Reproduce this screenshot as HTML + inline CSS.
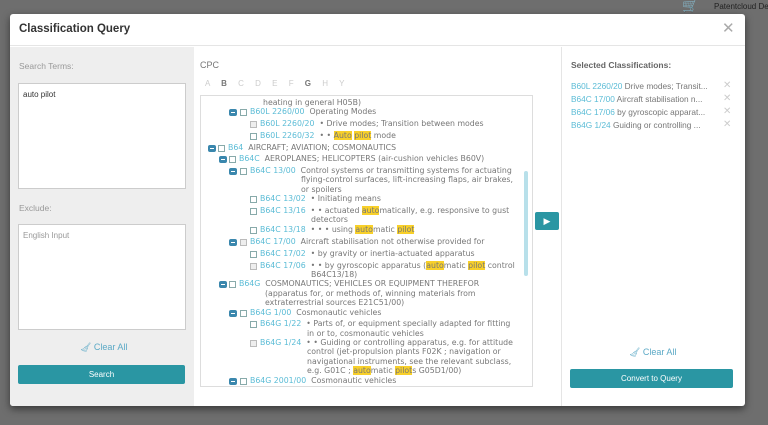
<!DOCTYPE html>
<html><head><style>
*{margin:0;padding:0;box-sizing:border-box}
body{width:768px;height:425px;position:relative;overflow:hidden;font-family:"Liberation Sans",sans-serif}
.a{position:absolute}
.modal{left:10px;top:14px;width:735px;height:392px;background:#fff;border-radius:3px;box-shadow:0 3px 8px rgba(0,0,0,.5);overflow:hidden}
.t{font-family:"DejaVu Sans",sans-serif;font-size:7.8px;color:#777;white-space:nowrap;line-height:10px}
.c{color:#5bbcd6}
.hl{background:#f8d02a;color:#777}
.m{width:8px;height:7px;background:#3a87ad;border-radius:2px}
.m:after{content:"";position:absolute;left:2px;top:3px;width:4px;height:1px;background:#fff}
.cb{width:7px;height:7px;border:1px solid #8aa;background:#fff}
.cb.k{border-color:#bbb;background:#eee}
.btn{background:#2a96a3;color:#fff;font-size:8px;text-align:center;border-radius:2px}
.lbl{font-size:8.5px;color:#999}
.ta{background:#fff;border:1px solid #ccc;font-size:8px;color:#333;padding:6px 4px}
.sel{font-size:8.3px;color:#777;white-space:nowrap}
.x{color:#ccc;font-size:10px}
</style></head><body>
<div class="a" style="left:0;top:0;width:768px;height:425px;background:#6e6e6e"></div>
<div class="a" style="left:682px;top:0;width:12px;height:12px;font-size:13px;color:#222;line-height:12px">&#128722;</div>
<div class="a" style="left:714px;top:2px;font-size:8px;color:#222;white-space:nowrap">Patentcloud De</div>
<div class="a modal">
 <div class="a" style="left:0;top:0;width:735px;height:32px;border-bottom:1px solid #e5e5e5"></div>
 <div class="a" style="left:9px;top:9px;font-size:11.5px;font-weight:bold;color:#333">Classification Query</div>
 <div class="a" style="left:712px;top:5px;font-size:15px;color:#aaa">&#x2715;</div>
 <div class="a" style="left:0;top:33px;width:184px;height:359px;background:#eeeeee"></div>
 <div class="a" style="left:551px;top:33px;width:1px;height:359px;background:#e5e5e5"></div>
</div>
<div class="a lbl" style="left:19px;top:61px">Search Terms:</div>
<div class="a ta" style="left:18px;top:83px;width:168px;height:106px">auto pilot</div>
<div class="a lbl" style="left:19px;top:203px">Exclude:</div>
<div class="a ta" style="left:18px;top:224px;width:168px;height:106px;color:#999">English Input</div>
<div class="a" style="left:80px;top:342px;font-size:9px;color:#5ba9c6">&#x1F9F9;&#xFE0E; Clear All</div>
<div class="a btn" style="left:18px;top:365px;width:167px;height:19px;line-height:19px">Search</div>

<div class="a" style="left:200px;top:60px;font-size:9px;color:#777">CPC</div>
<div class="a" style="left:205px;top:79px;font-size:8px;color:#ccc;word-spacing:9px;white-space:nowrap">A <b style="color:#777">B</b> C D E F <b style="color:#777">G</b> H Y</div>
<div class="a" style="left:200px;top:95px;width:333px;height:292px;border:1px solid #ddd;background:#fff;overflow:hidden">
 <div class="a" style="left:323px;top:75px;width:4px;height:105px;background:#b8e0ea;border-radius:2px"></div>
</div>
<div class="a t" style="left:263px;top:98px">heating in general H05B)</div>
<div class="a m" style="left:229px;top:109px"></div><div class="a cb" style="left:240px;top:109px"></div><div class="a t" style="left:250px;top:107px"><span class="c">B60L 2260/00</span>&nbsp; Operating Modes</div>
<div class="a cb k" style="left:250px;top:121px"></div><div class="a t" style="left:260px;top:119px"><span class="c">B60L 2260/20</span>&nbsp; • Drive modes; Transition between modes</div>
<div class="a cb" style="left:250px;top:133px"></div><div class="a t" style="left:260px;top:131px"><span class="c">B60L 2260/32</span>&nbsp; • • <span class="hl">Auto</span> <span class="hl">pilot</span> mode</div>
<div class="a m" style="left:208px;top:145px"></div><div class="a cb" style="left:218px;top:145px"></div><div class="a t" style="left:228px;top:143px"><span class="c">B64</span>&nbsp; AIRCRAFT; AVIATION; COSMONAUTICS</div>
<div class="a m" style="left:219px;top:156px"></div><div class="a cb" style="left:229px;top:156px"></div><div class="a t" style="left:239px;top:154px"><span class="c">B64C</span>&nbsp; AEROPLANES; HELICOPTERS (air-cushion vehicles B60V)</div>
<div class="a m" style="left:229px;top:168px"></div><div class="a cb" style="left:240px;top:168px"></div><div class="a t" style="left:250px;top:166px"><span class="c">B64C 13/00</span>&nbsp; Control systems or transmitting systems for actuating</div>
<div class="a t" style="left:301px;top:175px">flying-control surfaces, lift-increasing flaps, air brakes,</div>
<div class="a t" style="left:301px;top:185px">or spoilers</div>
<div class="a cb" style="left:250px;top:196px"></div><div class="a t" style="left:260px;top:194px"><span class="c">B64C 13/02</span>&nbsp; • Initiating means</div>
<div class="a cb" style="left:250px;top:208px"></div><div class="a t" style="left:260px;top:206px"><span class="c">B64C 13/16</span>&nbsp; • • actuated <span class="hl">auto</span>matically, e.g. responsive to gust</div>
<div class="a t" style="left:311px;top:215px">detectors</div>
<div class="a cb" style="left:250px;top:227px"></div><div class="a t" style="left:260px;top:225px"><span class="c">B64C 13/18</span>&nbsp; • • • using <span class="hl">auto</span>matic <span class="hl">pilot</span></div>
<div class="a m" style="left:229px;top:239px"></div><div class="a cb k" style="left:240px;top:239px"></div><div class="a t" style="left:250px;top:237px"><span class="c">B64C 17/00</span>&nbsp; Aircraft stabilisation not otherwise provided for</div>
<div class="a cb" style="left:250px;top:251px"></div><div class="a t" style="left:260px;top:249px"><span class="c">B64C 17/02</span>&nbsp; • by gravity or inertia-actuated apparatus</div>
<div class="a cb k" style="left:250px;top:263px"></div><div class="a t" style="left:260px;top:261px"><span class="c">B64C 17/06</span>&nbsp; • • by gyroscopic apparatus (<span class="hl">auto</span>matic <span class="hl">pilot</span> control</div>
<div class="a t" style="left:311px;top:270px">B64C13/18)</div>
<div class="a m" style="left:219px;top:281px"></div><div class="a cb" style="left:229px;top:281px"></div><div class="a t" style="left:239px;top:279px"><span class="c">B64G</span>&nbsp; COSMONAUTICS; VEHICLES OR EQUIPMENT THEREFOR</div>
<div class="a t" style="left:265px;top:289px">(apparatus for, or methods of, winning materials from</div>
<div class="a t" style="left:265px;top:298px">extraterrestrial sources E21C51/00)</div>
<div class="a m" style="left:229px;top:310px"></div><div class="a cb" style="left:240px;top:310px"></div><div class="a t" style="left:250px;top:308px"><span class="c">B64G 1/00</span>&nbsp; Cosmonautic vehicles</div>
<div class="a cb" style="left:250px;top:321px"></div><div class="a t" style="left:260px;top:319px"><span class="c">B64G 1/22</span>&nbsp; • Parts of, or equipment specially adapted for fitting</div>
<div class="a t" style="left:307px;top:329px">in or to, cosmonautic vehicles</div>
<div class="a cb k" style="left:250px;top:340px"></div><div class="a t" style="left:260px;top:338px"><span class="c">B64G 1/24</span>&nbsp; • • Guiding or controlling apparatus, e.g. for attitude</div>
<div class="a t" style="left:307px;top:347px">control (jet-propulsion plants F02K ; navigation or</div>
<div class="a t" style="left:307px;top:357px">navigational instruments, see the relevant subclass,</div>
<div class="a t" style="left:307px;top:366px">e.g. G01C ; <span class="hl">auto</span>matic <span class="hl">pilot</span>s G05D1/00)</div>
<div class="a m" style="left:229px;top:378px"></div><div class="a cb" style="left:240px;top:378px"></div><div class="a t" style="left:250px;top:376px"><span class="c">B64G 2001/00</span>&nbsp; Cosmonautic vehicles</div>

<div class="a btn" style="left:535px;top:212px;width:24px;height:18px;line-height:18px;font-size:9px">&#9654;</div>

<div class="a" style="left:571px;top:60px;font-size:8.5px;font-weight:bold;color:#666">Selected Classifications:</div>
<div class="a sel" style="left:571px;top:81px"><span class="c">B60L 2260/20</span> Drive modes; Transit...</div>
<div class="a sel" style="left:571px;top:94px"><span class="c">B64C 17/00</span> Aircraft stabilisation n...</div>
<div class="a sel" style="left:571px;top:107px"><span class="c">B64C 17/06</span> by gyroscopic apparat...</div>
<div class="a sel" style="left:571px;top:120px"><span class="c">B64G 1/24</span> Guiding or controlling ...</div>
<div class="a x" style="left:723px;top:80px">✕</div>
<div class="a x" style="left:723px;top:93px">✕</div>
<div class="a x" style="left:723px;top:106px">✕</div>
<div class="a x" style="left:723px;top:119px">✕</div>
<div class="a" style="left:629px;top:347px;font-size:9px;color:#5ba9c6">&#x1F9F9;&#xFE0E; Clear All</div>
<div class="a btn" style="left:570px;top:369px;width:163px;height:19px;line-height:19px">Convert to Query</div>
</body></html>
